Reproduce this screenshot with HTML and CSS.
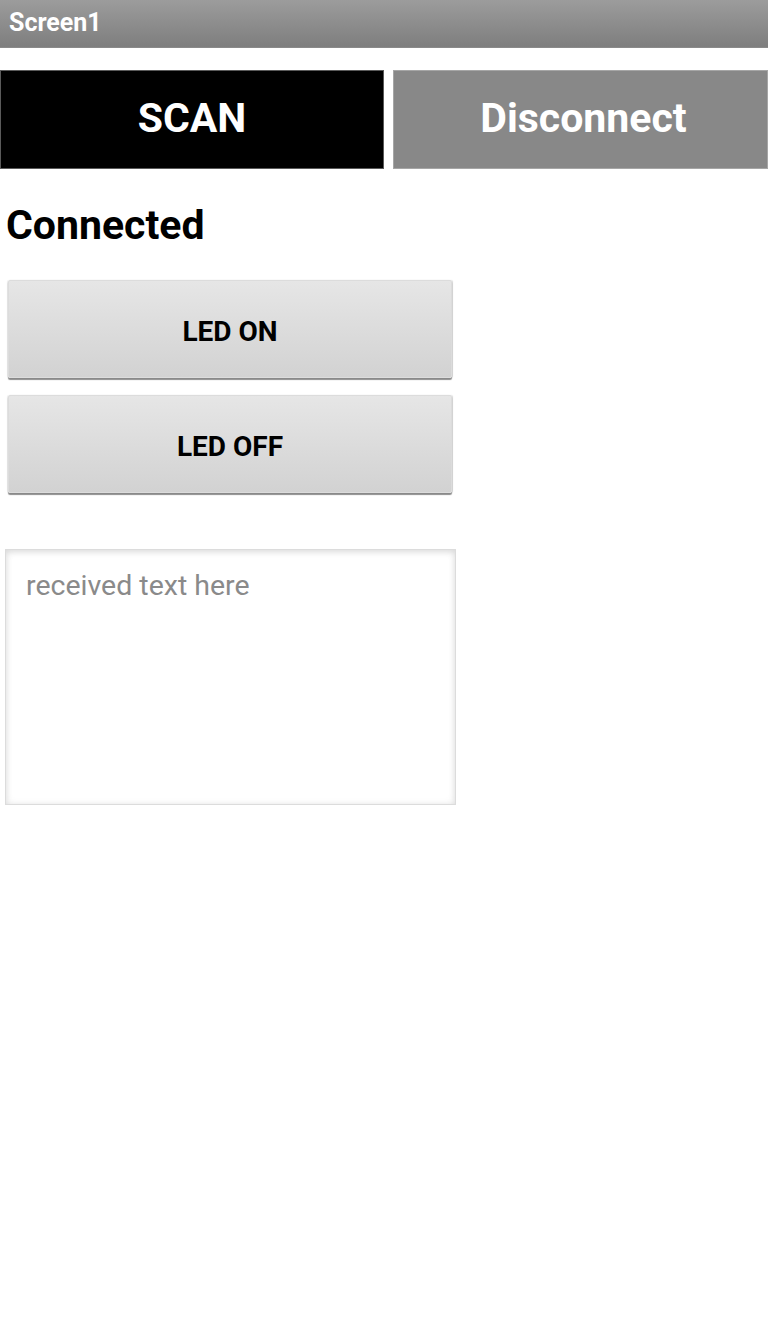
FILE: index.html
```html
<!DOCTYPE html>
<html>
<head>
<meta charset="utf-8">
<link rel="stylesheet" href="styles.css">
</head>
<body>
<div class="titlebar">Screen1</div>
<div class="toprow">
  <div class="btn-scan">SCAN</div>
  <div class="btn-disc">Disconnect</div>
</div>
<div class="status">Connected</div>
<div class="ledbtn first">LED ON</div>
<div class="ledbtn second">LED OFF</div>
<div class="textbox"><span class="placeholder">received text here</span></div>
</body>
</html>
```
FILE: styles.css
```css
html, body {
  margin: 0;
  padding: 0;
  background: #fff;
  font-family: Roboto, "Liberation Sans", sans-serif;
}
.titlebar {
  height: 48px;
  box-sizing: border-box;
  background: linear-gradient(#9c9c9c, #7e7e7e);
  color: #fff;
  font-weight: 700;
  font-size: 25px;
  line-height: 45px;
  padding-left: 9px;
  border-bottom: 1px solid #8a8a8a;
}
.toprow {
  display: flex;
  margin-top: 22px;
  gap: 9px;
  height: 99px;
}
.btn-scan, .btn-disc {
  display: flex;
  align-items: center;
  justify-content: center;
  color: #fff;
  font-weight: 700;
  font-size: 41px;
  box-sizing: border-box;
  padding-bottom: 4px;
}
.btn-scan {
  width: 384px;
  background: #000;
  border: 1px solid #5a5a5a;
}
.btn-disc {
  flex: 1;
  background: #888;
  border: 1px solid #a6a6a6;
  padding-left: 6px;
}
.status {
  margin: 36px 0 0 6px;
  font-size: 41px;
  font-weight: 700;
  color: #000;
  line-height: 40px;
  height: 40px;
}
.ledbtn {
  margin-left: 8px;
  width: 444px;
  height: 98px;
  box-sizing: border-box;
  display: flex;
  align-items: center;
  justify-content: center;
  padding-top: 4px;
  font-size: 28px;
  font-weight: 700;
  color: #000;
  background: linear-gradient(#e6e6e6, #d2d2d2);
  border: 1px solid #dcdcdc;
  border-radius: 2px;
  box-shadow: 0 2px 1px rgba(0,0,0,0.45), 1px 0 1px rgba(0,0,0,0.15), -1px 0 1px rgba(0,0,0,0.08);
}
.ledbtn.first { margin-top: 35px; }
.ledbtn.second { margin-top: 17px; }
.textbox {
  margin: 56px 0 0 5px;
  width: 451px;
  height: 256px;
  box-sizing: border-box;
  border: 1px solid #dcdcdc;
  box-shadow: inset 0 2px 6px rgba(0,0,0,0.12), inset 0 0 8px rgba(0,0,0,0.05);
  padding: 20px 0 0 20px;
}
.placeholder {
  font-size: 28.5px;
  color: #8a8a8a;
  line-height: 32px;
}
```
